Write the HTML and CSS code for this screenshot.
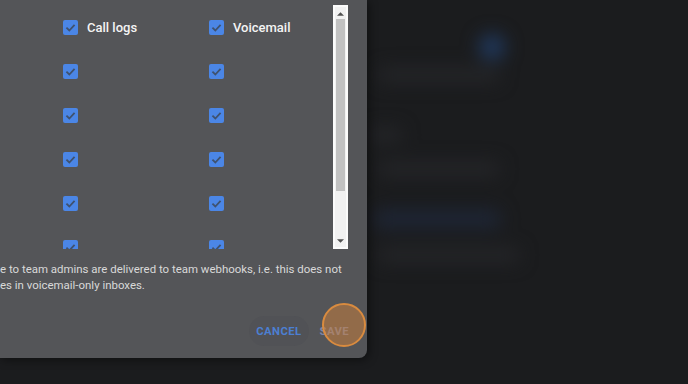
FILE: index.html
```html
<!DOCTYPE html>
<html>
<head>
<meta charset="utf-8">
<link rel="stylesheet" href="styles.css">
</head>
<body>
<div class="screen">
  <div class="dialog">
    <div class="top">
      <div class="list">
        <div class="cell"><span class="cb"><svg viewBox="0 0 14 14"><path d="M3.2 7.2 L5.9 9.8 L10.8 4.6"/></svg></span><span class="lbl">Call logs</span></div>
        <div class="cell"><span class="cb"><svg viewBox="0 0 14 14"><path d="M3.2 7.2 L5.9 9.8 L10.8 4.6"/></svg></span><span class="lbl">Voicemail</span></div>
        <div class="cell"><span class="cb"><svg viewBox="0 0 14 14"><path d="M3.2 7.2 L5.9 9.8 L10.8 4.6"/></svg></span></div>
        <div class="cell"><span class="cb"><svg viewBox="0 0 14 14"><path d="M3.2 7.2 L5.9 9.8 L10.8 4.6"/></svg></span></div>
        <div class="cell"><span class="cb"><svg viewBox="0 0 14 14"><path d="M3.2 7.2 L5.9 9.8 L10.8 4.6"/></svg></span></div>
        <div class="cell"><span class="cb"><svg viewBox="0 0 14 14"><path d="M3.2 7.2 L5.9 9.8 L10.8 4.6"/></svg></span></div>
        <div class="cell"><span class="cb"><svg viewBox="0 0 14 14"><path d="M3.2 7.2 L5.9 9.8 L10.8 4.6"/></svg></span></div>
        <div class="cell"><span class="cb"><svg viewBox="0 0 14 14"><path d="M3.2 7.2 L5.9 9.8 L10.8 4.6"/></svg></span></div>
        <div class="cell"><span class="cb"><svg viewBox="0 0 14 14"><path d="M3.2 7.2 L5.9 9.8 L10.8 4.6"/></svg></span></div>
        <div class="cell"><span class="cb"><svg viewBox="0 0 14 14"><path d="M3.2 7.2 L5.9 9.8 L10.8 4.6"/></svg></span></div>
        <div class="cell"><span class="cb"><svg viewBox="0 0 14 14"><path d="M3.2 7.2 L5.9 9.8 L10.8 4.6"/></svg></span></div>
        <div class="cell"><span class="cb"><svg viewBox="0 0 14 14"><path d="M3.2 7.2 L5.9 9.8 L10.8 4.6"/></svg></span></div>
      </div>
      <div class="scrollbar">
        <div class="arrow"><svg viewBox="0 0 8 5"><path d="M0 5 L4 1 L8 5 Z"/></svg></div>
        <div class="thumb"></div>
        <div class="track"></div>
        <div class="arrow"><svg viewBox="0 0 8 5"><path d="M0 0 L8 0 L4 4 Z"/></svg></div>
      </div>
    </div>
    <p class="note"><span class="line">e to team admins are delivered to team webhooks, i.e. this does not</span><span class="line">es in voicemail-only inboxes.</span></p>
    <div class="actions">
      <button class="btn cancel">CANCEL</button>
      <button class="btn save">SAVE<span class="click"></span></button>
    </div>
  </div>
  <div class="backdrop">
    <div class="blob"></div>
    <div class="bar b1"></div>
    <div class="bar b2"></div>
    <div class="bar b3"></div>
    <div class="bar b4 blue"></div>
    <div class="bar b5"></div>
  </div>
</div>
</body>
</html>
```
FILE: styles.css
```css
html, body {
  margin: 0;
  padding: 0;
  background: #1b1c1e;
  font-family: Roboto, "Liberation Sans", sans-serif;
}
.screen {
  display: flex;
  width: 688px;
  height: 384px;
  overflow: hidden;
}
.dialog {
  position: relative;
  z-index: 2;
  width: 367px;
  height: 358px;
  flex: none;
  background: #545558;
  border-bottom-right-radius: 8px;
  box-shadow: 2px 2px 10px rgba(0,0,0,0.45);
  display: flex;
  flex-direction: column;
}
.top {
  display: flex;
  height: 249px;
}
.list {
  width: 270px;
  flex: none;
  padding: 5px 0 0 63px;
  overflow: hidden;
  display: grid;
  grid-template-columns: 146px 1fr;
  grid-auto-rows: 44px;
  align-content: start;
}
.cell {
  display: flex;
  align-items: center;
}
.cb {
  width: 15px;
  height: 15px;
  border-radius: 2px;
  background: #4b86e6;
  display: flex;
  flex: none;
}
.cb svg {
  width: 15px;
  height: 15px;
  fill: none;
  stroke: #3f526f;
  stroke-width: 1.7;
}
.lbl {
  margin-left: 9px;
  font-size: 13px;
  font-weight: 500;
  color: #f4f4f4;
}
.scrollbar {
  margin-top: 5px;
  width: 15px;
  height: 244px;
  box-sizing: border-box;
  border: 2px solid #fbfbfb;
  background: #f1f1f1;
  display: flex;
  flex-direction: column;
}
.arrow {
  height: 12px;
  display: flex;
  align-items: center;
  justify-content: center;
  flex: none;
}
.arrow svg {
  width: 7px;
  height: 5px;
  fill: #505050;
}
.thumb {
  height: 172px;
  margin: 0 1px;
  background: #c1c1c1;
  flex: none;
}
.track {
  flex: 1;
}
.note {
  margin: 12px 0 0 0;
  font-size: 11.45px;
  line-height: 16px;
  color: #d9d9d9;
}
.line {
  display: block;
  white-space: nowrap;
}
.actions {
  margin-top: 23px;
  display: flex;
  justify-content: flex-end;
  gap: 4px;
  padding-right: 11px;
}
.btn {
  position: relative;
  height: 30px;
  padding: 0 7px;
  border: none;
  border-radius: 15px;
  font-family: Roboto, "Liberation Sans", sans-serif;
  font-size: 11.3px;
  font-weight: 700;
  letter-spacing: 0.4px;
  background: transparent;
}
.cancel {
  color: #4c7fd2;
  background: #515256;
}
.save {
  color: #7d87ad;
}
.click {
  position: absolute;
  left: 9px;
  top: -13px;
  width: 44px;
  height: 44px;
  box-sizing: border-box;
  border-radius: 50%;
  border: 2px solid #d98b3f;
  background: rgba(196, 126, 62, 0.55);
}
.backdrop {
  flex: 1;
  position: relative;
  filter: blur(9px);
}
.blob {
  position: absolute;
  left: 112px;
  top: 34px;
  width: 26px;
  height: 26px;
  border-radius: 50%;
  background: #20395e;
}
.bar {
  position: absolute;
  height: 14px;
  background: #252629;
  border-radius: 4px;
}
.b1 { left: 12px; top: 68px; width: 120px; }
.b2 { left: 4px; top: 128px; width: 30px; }
.b3 { left: 12px; top: 162px; width: 120px; }
.b4 { left: 8px; top: 210px; width: 125px; height: 18px; }
.b5 { left: 12px; top: 248px; width: 140px; }
.blue { background: #1e2636; }
```
